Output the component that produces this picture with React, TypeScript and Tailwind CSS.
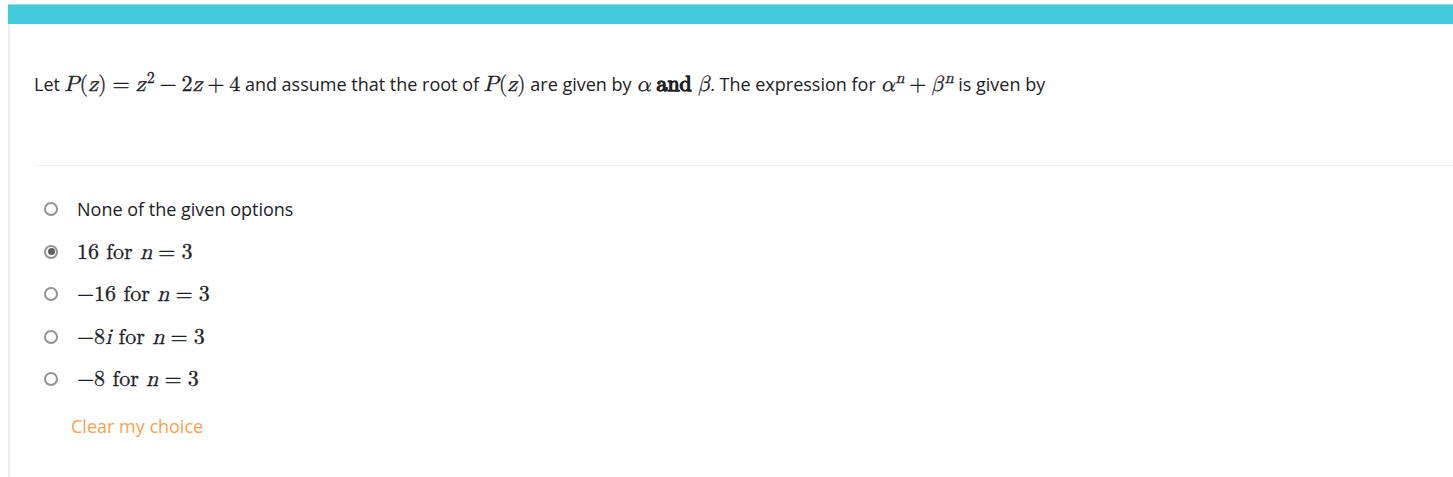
import React from 'react';

const mathFont = "font-['Latin_Modern_Math','Latin_Modern_Roman','Liberation_Serif',serif] [-webkit-text-stroke:0.3px_#1d2125]";

const M: React.FC<{ children: React.ReactNode; i?: boolean; className?: string }> = ({ children, i, className }) => (
  <span className={`${mathFont} text-[22px] ${i ? 'italic' : ''} ${className ?? ''}`}>{children}</span>
);

// relation (=) gets thick space, binary (+, −) medium space
const Op: React.FC<{ children: React.ReactNode; rel?: boolean }> = ({ children, rel }) => (
  <span className={`${mathFont} text-[22px] ${rel ? 'px-[0.2778em]' : 'px-[0.2222em]'}`}>{children}</span>
);

const Sup: React.FC<{ children: React.ReactNode; i?: boolean }> = ({ children, i }) => (
  <span className={`${mathFont} text-[16px] relative -top-[8px] pl-[1px] ${i ? 'italic' : ''}`}>{children}</span>
);

const options: { key: string; content: React.ReactNode; checked?: boolean }[] = [
  { key: 'none', content: <span>None of the given options</span> },
  {
    key: '16',
    checked: true,
    content: (
      <span>
        <M>16 for </M>
        <M i>n</M>
        <Op rel>=</Op>
        <M>3</M>
      </span>
    ),
  },
  {
    key: '-16',
    content: (
      <span>
        <M>−16 for </M>
        <M i>n</M>
        <Op rel>=</Op>
        <M>3</M>
      </span>
    ),
  },
  {
    key: '-8i',
    content: (
      <span>
        <M>−8</M>
        <M i>i</M>
        <M> for </M>
        <M i>n</M>
        <Op rel>=</Op>
        <M>3</M>
      </span>
    ),
  },
  {
    key: '-8',
    content: (
      <span>
        <M>−8 for </M>
        <M i>n</M>
        <Op rel>=</Op>
        <M>3</M>
      </span>
    ),
  },
];

const Radio: React.FC<{ checked?: boolean }> = ({ checked }) => (
  <span className="w-[14px] h-[14px] rounded-full border-2 border-[#939393] bg-white flex items-center justify-center shrink-0">
    {checked && <span className="w-[7px] h-[7px] rounded-full bg-[#5f5f5f]" />}
  </span>
);

export default function App() {
  return (
    <div className="w-full h-[477px] bg-white overflow-hidden font-['Open_Sans','Noto_Sans',sans-serif] text-[#1d2125]">
      <div className="ml-[8px] mt-[4px]">
        <div className="h-[20px] bg-[#43cbdb] border-t border-[#8fdfe8]" />
        <div className="border-l-2 border-[#ececec] h-[453px] pl-[24px]">
          <div className="pt-[47px] h-[141px] text-[18px] leading-[26px]">
            Let <M i>P</M>
            <M>(</M>
            <M i>z</M>
            <M>)</M>
            <Op rel>=</Op>
            <M i>z</M>
            <Sup>2</Sup>
            <Op>−</Op>
            <M>2</M>
            <M i>z</M>
            <Op>+</Op>
            <M>4</M> and assume that the root of <M i>P</M>
            <M>(</M>
            <M i>z</M>
            <M>)</M> are given by <M i>α</M>
            <M className="font-bold px-[6px]">and</M>
            <M i>β</M>. The expression for{' '}
            <M i>α</M>
            <Sup i>n</Sup>
            <Op>+</Op>
            <M i>β</M>
            <Sup i>n</Sup> is given by
          </div>
          <div className="border-t border-[#efefef]" />
          <div className="pt-[22px] pl-[10px] flex flex-col">
            {options.map((o) => (
              <label key={o.key} className="flex items-center gap-[19px] h-[42.5px] text-[18px]">
                <Radio checked={o.checked} />
                <span className="leading-none">{o.content}</span>
              </label>
            ))}
          </div>
          <div className="pl-[37px] pt-[12px] text-[18px] text-[#f8a14f]">Clear my choice</div>
        </div>
      </div>
    </div>
  );
}
